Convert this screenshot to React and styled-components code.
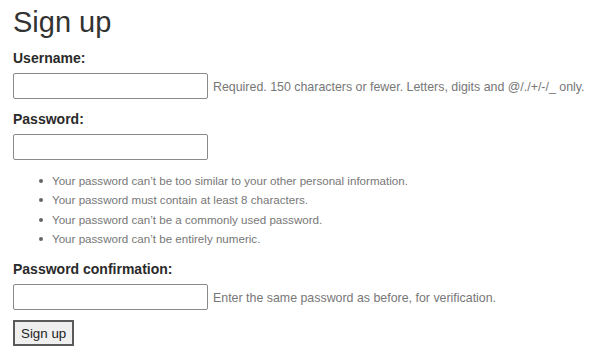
import React from "react";
import styled, { createGlobalStyle } from "styled-components";

const Global = createGlobalStyle`
  html, body { margin: 0; padding: 0; background: #fff; }
  body { font-family: "Liberation Sans", Arial, sans-serif; color: #333; }
`;

const Page = styled.div`
  padding: 5px 13px 0;
`;

const Title = styled.h1`
  margin: 0;
  font-size: 29px;
  font-weight: 400;
  line-height: 34px;
  color: #333;
`;

const Form = styled.form`
  display: flex;
  flex-direction: column;
`;

const Label = styled.label`
  display: block;
  font-size: 14px;
  font-weight: 700;
  line-height: 16px;
  color: #2a2a2a;
  margin-top: ${(p) => p.$top}px;
`;

const Row = styled.div`
  display: flex;
  align-items: center;
  gap: 5px;
  margin-top: 7px;
`;

const Input = styled.input`
  box-sizing: border-box;
  width: 195px;
  height: 26px;
  margin: 0;
  border: 1px solid #8a8a8a;
  border-radius: 2px;
  background: #fff;
  font: 13.33px "Liberation Sans", Arial, sans-serif;
  padding: 1px 3px;
`;

const Help = styled.span`
  font-size: 12.4px;
  color: #777;
  line-height: 14px;
  padding-top: 2px;
`;

const Rules = styled.ul`
  margin: 11px 0 0;
  padding-left: 26px;
  font-size: 11.6px;
  line-height: 19.3px;
  color: #777;
  list-style: none;
`;

const Rule = styled.li`
  position: relative;
  padding-left: 13px;
  &::before {
    content: "";
    position: absolute;
    left: 0;
    top: 8px;
    width: 4px;
    height: 4px;
    border-radius: 50%;
    background: #666;
  }
`;

const Button = styled.button`
  align-self: flex-start;
  margin-top: 10px;
  height: 26px;
  padding: 0 6px;
  border: 2px solid #5a5a5a;
  border-radius: 0;
  background: #efefef;
  color: #222;
  font: 13.33px "Liberation Sans", Arial, sans-serif;
  cursor: pointer;
`;

export default function App() {
  return (
    <>
      <Global />
      <Page>
        <Title>Sign up</Title>
        <Form onSubmit={(e) => e.preventDefault()}>
          <Label htmlFor="id_username" $top={11}>Username:</Label>
          <Row>
            <Input id="id_username" type="text" />
            <Help>Required. 150 characters or fewer. Letters, digits and @/./+/-/_ only.</Help>
          </Row>
          <Label htmlFor="id_password1" $top={12}>Password:</Label>
          <Row>
            <Input id="id_password1" type="password" />
          </Row>
          <Rules>
            <Rule>Your password can’t be too similar to your other personal information.</Rule>
            <Rule>Your password must contain at least 8 characters.</Rule>
            <Rule>Your password can’t be a commonly used password.</Rule>
            <Rule>Your password can’t be entirely numeric.</Rule>
          </Rules>
          <Label htmlFor="id_password2" $top={13}>Password confirmation:</Label>
          <Row>
            <Input id="id_password2" type="password" />
            <Help>Enter the same password as before, for verification.</Help>
          </Row>
          <Button type="submit">Sign up</Button>
        </Form>
      </Page>
    </>
  );
}
